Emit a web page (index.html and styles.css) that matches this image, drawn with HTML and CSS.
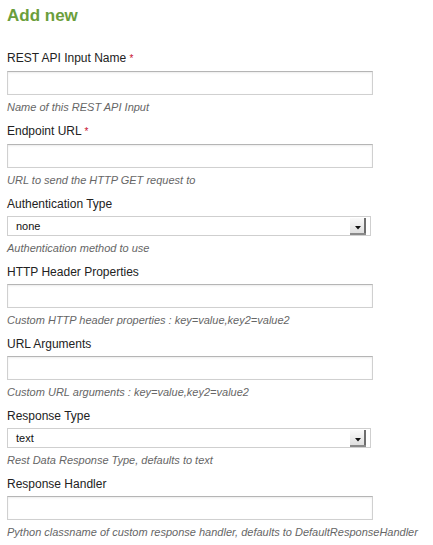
FILE: index.html
```html
<!DOCTYPE html>
<html>
<head>
<meta charset="utf-8">
<link rel="stylesheet" href="styles.css">
</head>
<body>
<h1 class="title">Add new</h1>
<form class="form">
  <div class="field">
    <label class="label">REST API Input Name <span class="req">*</span></label>
    <div class="input"></div>
    <div class="help">Name of this REST API Input</div>
  </div>
  <div class="field">
    <label class="label">Endpoint URL <span class="req">*</span></label>
    <div class="input"></div>
    <div class="help">URL to send the HTTP GET request to</div>
  </div>
  <div class="field">
    <label class="label">Authentication Type</label>
    <div class="select"><span class="select-text">none</span><svg class="arrow" width="16" height="17" viewBox="0 0 16 17"><defs><linearGradient id="g1" x1="0" y1="0" x2="0" y2="1"><stop offset="0" stop-color="#fafafa"/><stop offset="1" stop-color="#dcdcdc"/></linearGradient></defs><rect x="0" y="0" width="16" height="17" fill="url(#g1)"/><rect x="14" y="0" width="2" height="17" fill="#6e6e6e"/><rect x="0" y="15" width="16" height="2" fill="#8a8a8a"/><path d="M5 8 L11 8 L8 11.5 Z" fill="#111"/></svg></div>
    <div class="help">Authentication method to use</div>
  </div>
  <div class="field">
    <label class="label">HTTP Header Properties</label>
    <div class="input"></div>
    <div class="help">Custom HTTP header properties : key=value,key2=value2</div>
  </div>
  <div class="field">
    <label class="label">URL Arguments</label>
    <div class="input"></div>
    <div class="help">Custom URL arguments : key=value,key2=value2</div>
  </div>
  <div class="field">
    <label class="label">Response Type</label>
    <div class="select"><span class="select-text">text</span><svg class="arrow" width="16" height="17" viewBox="0 0 16 17"><defs><linearGradient id="g2" x1="0" y1="0" x2="0" y2="1"><stop offset="0" stop-color="#fafafa"/><stop offset="1" stop-color="#dcdcdc"/></linearGradient></defs><rect x="0" y="0" width="16" height="17" fill="url(#g2)"/><rect x="14" y="0" width="2" height="17" fill="#6e6e6e"/><rect x="0" y="15" width="16" height="2" fill="#8a8a8a"/><path d="M5 8 L11 8 L8 11.5 Z" fill="#111"/></svg></div>
    <div class="help">Rest Data Response Type, defaults to text</div>
  </div>
  <div class="field">
    <label class="label">Response Handler</label>
    <div class="input"></div>
    <div class="help">Python classname of custom response handler, defaults to DefaultResponseHandler</div>
  </div>
</form>
</body>
</html>
```
FILE: styles.css
```css
html, body {
  margin: 0;
  background: #ffffff;
}
body {
  padding: 6px 7px;
  font-family: "Liberation Sans", Arial, sans-serif;
  color: #222;
}
.title {
  margin: 0 0 24px 0;
  font-size: 17px;
  line-height: 20px;
  font-weight: bold;
  color: #6b9e3c;
}
.form {
  display: flex;
  flex-direction: column;
  gap: 9px;
}
.field {
  display: flex;
  flex-direction: column;
  align-items: flex-start;
}
.label {
  display: block;
  font-size: 12px;
  line-height: 16px;
  color: #222;
  margin-bottom: 4px;
}
.req {
  color: #c8102e;
  font-size: 10px;
}
.input {
  box-sizing: border-box;
  width: 366px;
  height: 24px;
  border: 1px solid #d0d0d0;
  border-top-color: #b5b5b5;
  box-shadow: inset 0 1px 2px rgba(0,0,0,0.08);
  background: #fff;
}
.select {
  box-sizing: border-box;
  width: 364px;
  height: 20px;
  border: 1px solid #cfcfcf;
  background: #fff;
  display: flex;
  align-items: center;
  padding: 0 4px 0 8px;
}
.select-text {
  flex: 1;
  font-size: 11px;
  color: #111;
}
.arrow {
  display: block;
}
.help {
  margin-top: 5px;
  font-size: 11px;
  line-height: 14px;
  font-style: italic;
  color: #666;
}
```
